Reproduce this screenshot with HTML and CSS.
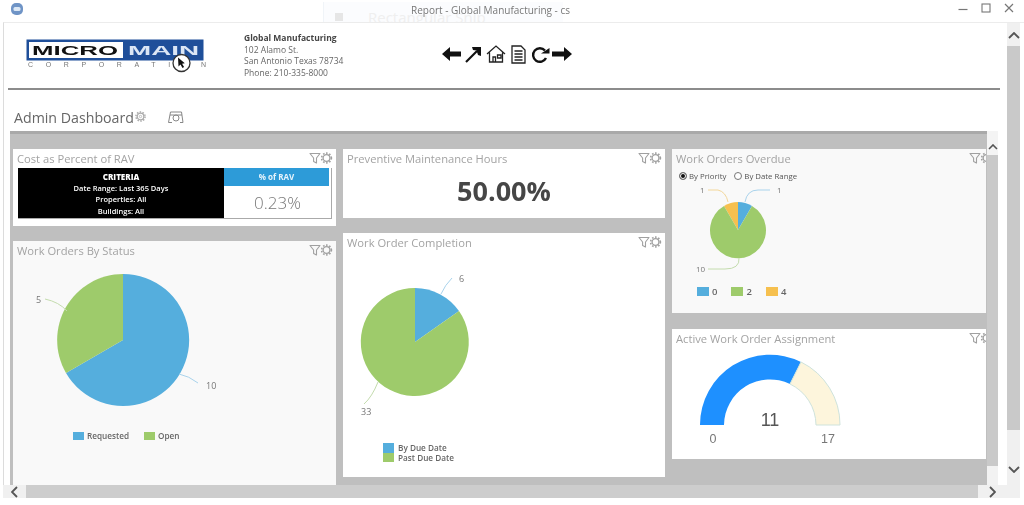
FILE: index.html
```html
<!DOCTYPE html>
<html lang="en">
<head>
<meta charset="utf-8">
<title>Report - Global Manufacturing - cs</title>
<link rel="stylesheet" href="styles.css">
</head>
<body>
<svg class="defs" width="0" height="0" aria-hidden="true">
  <symbol id="gear" viewBox="0 0 12 12">
    <circle cx="6" cy="6" r="3.6" fill="none" stroke="currentColor" stroke-width="1.3"/>
    <circle cx="6" cy="6" r="5" fill="none" stroke="currentColor" stroke-width="1.6" stroke-dasharray="1.6 1.55"/>
    <circle cx="6" cy="6" r="1.3" fill="none" stroke="currentColor" stroke-width=".8"/>
  </symbol>
  <symbol id="tools" viewBox="0 0 24 12">
    <path d="M1 1.5h10L7.5 6v5L4.6 9.5V6z" fill="none" stroke="currentColor" stroke-width="1.1" stroke-linejoin="round"/>
    <g transform="translate(11.5 0)">
      <circle cx="6" cy="6" r="3.4" fill="none" stroke="currentColor" stroke-width="1.3"/>
      <circle cx="6" cy="6" r="4.9" fill="none" stroke="currentColor" stroke-width="1.6" stroke-dasharray="1.6 1.55"/>
    </g>
  </symbol>
</svg>
<div class="app">
  <header class="titlebar">
    <svg class="app-icon" width="14" height="14" viewBox="0 0 14 14"><rect x="1" y="1" width="12" height="12" rx="5" fill="#6f94c6"/><rect x="3.5" y="5" width="7" height="4" rx="1.5" fill="#dce8f5"/></svg>
    <div class="win-title">Report - Global Manufacturing - cs</div>
    <div class="win-controls">
      <svg width="12" height="12" viewBox="0 0 12 12"><path d="M1.5 7.5h9" stroke="#777" stroke-width="1.2"/></svg>
      <svg width="12" height="12" viewBox="0 0 12 12"><rect x="2" y="2" width="8" height="8" fill="none" stroke="#777" stroke-width="1.1"/></svg>
      <svg width="12" height="12" viewBox="0 0 12 12"><path d="M2 2l8 8M10 2l-8 8" stroke="#777" stroke-width="1.2"/></svg>
    </div>
    <div class="snip"><span class="snip-icon"></span>Rectangular Snip</div>
  </header>

  <div class="frame">
    <main class="view">
      <section class="report-head">
        <svg class="logo" width="190" height="38" viewBox="0 0 190 38">
          <rect x="0.500" y="4.500" width="177" height="21" fill="#1f4f9a"/>
          <rect x="3" y="7" width="94" height="16" fill="#fff"/>
          <text x="6" y="20" class="logo-a" textLength="86" lengthAdjust="spacingAndGlyphs">MICRO</text>
          <text x="102" y="20" class="logo-b" textLength="71" lengthAdjust="spacingAndGlyphs">MAIN</text>
          <text x="2" y="32" class="logo-c" textLength="178" lengthAdjust="spacing">CORPORATION</text>
          <circle cx="155.500" cy="28" r="8.500" fill="#fff" stroke="#333" stroke-width="1.300"/>
          <path d="M152 22.500l.5 9 2-2 2 3.500 1.600-1-2-3.300 2.700-.5z" fill="#111"/>
        </svg>
        <div class="org">
          <strong>Global Manufacturing</strong>
          <span>102 Alamo St.</span>
          <span>San Antonio Texas 78734</span>
          <span>Phone: 210-335-8000</span>
        </div>
        <svg class="nav-icons" width="132" height="22" viewBox="0 0 132 22">
          <path d="M1 11l8-7v4.500h11v5H9V18z" fill="#111"/>
          <path d="M25 19L36 8" fill="none" stroke="#111" stroke-width="2.200"/>
          <path d="M31 4h9v9l-3-1-1.500-4.500L32 7z" fill="#111"/>
          <path d="M46 11l9-8 9 8M48.500 9.500V19h13V9.500M52 19v-5h2.500v5M56.500 12h3.500v3h-3.500z" fill="none" stroke="#222" stroke-width="1.300"/>
          <path d="M71 3h9l4 4v13H71zM73.500 8h8M73.500 11h8M73.500 14h8M73.500 17h8" fill="none" stroke="#222" stroke-width="1.300"/>
          <path d="M105 15a6.800 6.800 0 1 1-1-7.500" fill="none" stroke="#111" stroke-width="2.400"/>
          <path d="M100 10.500h8.500V5z" fill="#111"/>
          <path d="M131 11l-8-7v4.500h-12v5h12V18z" fill="#111"/>
        </svg>
      </section>
      <hr class="rule">
      <div class="dash-title">
        <h1>Admin Dashboard</h1>
        <svg class="gear" width="11" height="11"><use href="#gear"/></svg>
        <svg class="report-icon" width="18" height="14" viewBox="0 0 18 14"><path d="M5 12.500H1.500L3.500 2h11l1.500 10.500h-3M3 5h12" fill="none" stroke="#888" stroke-width="1"/><circle cx="9" cy="8" r="3" fill="none" stroke="#888"/></svg>
      </div>

      <div class="panel-wrap">
        <div class="panel">
          <div class="col col-a">
            <article class="card card-rav">
              <div class="card-head"><h2>Cost as Percent of RAV</h2><svg class="tools" width="24" height="12"><use href="#tools"/></svg></div>
              <div class="rav">
                <div class="criteria">
                  <b>CRITERIA</b>
                  <span>Date Range: Last 365 Days</span>
                  <span>Properties: All</span>
                  <span>Buildings: All</span>
                </div>
                <div class="rav-side">
                  <div class="rav-label">% of RAV</div>
                  <div class="rav-value">0.23%</div>
                </div>
              </div>
            </article>
            <article class="card card-status tint">
              <div class="card-head"><h2>Work Orders By Status</h2><svg class="tools" width="24" height="12"><use href="#tools"/></svg></div>
              <svg class="chart" width="323" height="155" viewBox="0 2 323 155">
                <path d="M110 16A66 66 0 1 1 53 115L110 82Z" fill="#55aedd"/>
                <path d="M110 16A66 66 0 0 0 53 115L110 82Z" fill="#9ecb6b"/>
                <path d="M32 41q14 3 22 12" class="lead-g"/>
                <path d="M166 116q10 2 19 9" class="lead-b"/>
                <text x="23" y="45" class="lbl">5</text>
                <text x="193" y="131" class="lbl">10</text>
              </svg>
              <div class="legend legend-status">
                <span class="key"><i class="sw blue"></i>Requested</span>
                <span class="key"><i class="sw green"></i>Open</span>
              </div>
            </article>
          </div>

          <div class="col col-b">
            <article class="card card-pm">
              <div class="card-head"><h2>Preventive Maintenance Hours</h2><svg class="tools" width="24" height="12"><use href="#tools"/></svg></div>
              <div class="big">50.00%</div>
            </article>
            <article class="card card-comp">
              <div class="card-head"><h2>Work Order Completion</h2><svg class="tools" width="24" height="12"><use href="#tools"/></svg></div>
              <svg class="chart" width="322" height="174" viewBox="0 1 322 174">
                <path d="M72 37A54 54 0 0 1 116 60L72 91Z" fill="#55aedd"/>
                <path d="M72 37A54 54 0 1 0 116 60L72 91Z" fill="#9ecb6b"/>
                <path d="M98 43q4-9 11-16" class="lead-b"/>
                <path d="M35 131q-6 15-14 22" class="lead-g"/>
                <text x="116" y="31" class="lbl">6</text>
                <text x="18" y="164" class="lbl">33</text>
              </svg>
              <div class="legend legend-comp">
                <span class="key"><i class="sw blue"></i>By Due Date</span>
                <span class="key"><i class="sw green"></i>Past Due Date</span>
              </div>
            </article>
          </div>

          <div class="col col-c">
            <article class="card card-over tint">
              <div class="card-head"><h2>Work Orders Overdue</h2><svg class="tools" width="24" height="12"><use href="#tools"/></svg></div>
              <div class="radios">
                <span class="radio"><i class="dot on"></i>By Priority</span>
                <span class="radio"><i class="dot"></i>By Date Range</span>
              </div>
              <svg class="chart" width="314" height="100" viewBox="0 0 314 100">
                <path d="M66 20A28 28 0 0 1 80 24L66 48Z" fill="#55aedd"/>
                <path d="M66 20A28 28 0 0 0 52 24L66 48Z" fill="#f6c04f"/>
                <path d="M80 24A28 28 0 1 1 52 24L66 48Z" fill="#9ecb6b"/>
                <path d="M73 20q2-12 13-12h12" class="lead-b"/>
                <path d="M56 20q-2-10-10-12H36" class="lead-o"/>
                <path d="M67 76q1 11-14 11H36" class="lead-g"/>
                <text x="105" y="11" class="lbl tiny">1</text>
                <text x="28" y="11" class="lbl tiny">1</text>
                <text x="24" y="90" class="lbl tiny">10</text>
              </svg>
              <div class="legend legend-over">
                <span class="key"><i class="sw blue"></i>0</span>
                <span class="key"><i class="sw green"></i>2</span>
                <span class="key"><i class="sw orange"></i>4</span>
              </div>
            </article>
            <article class="card card-gauge">
              <div class="card-head"><h2>Active Work Order Assignment</h2><svg class="tools" width="24" height="12"><use href="#tools"/></svg></div>
              <svg class="chart" width="314" height="108" viewBox="0 2 314 108">
                <path d="M28 79A70 70 0 0 1 129 16L118 38A46 46 0 0 0 52 79Z" fill="#1e90ff"/>
                <path d="M129 16A70 70 0 0 1 168 79H144A46 46 0 0 0 118 38Z" fill="#fdf5dc" stroke="#cfe3dc"/>
                <text x="98" y="80" class="gauge-val" text-anchor="middle">11</text>
                <text x="41" y="97" class="gauge-end" text-anchor="middle">0</text>
                <text x="156" y="97" class="gauge-end" text-anchor="middle">17</text>
              </svg>
            </article>
          </div>
        </div>
        <div class="vbar vbar-in">
          <span class="vcap top"><svg width="10" height="6" viewBox="0 0 10 6"><path d="M1 5l4-4 4 4" fill="none" stroke="#555" stroke-width="1.600"/></svg></span>
          <span class="vthumb"></span>
          <span class="vcap low"></span>
        </div>
      </div>
    </main>
    <div class="vbar vbar-out">
      <span class="vcap top"><svg width="12" height="7" viewBox="0 0 12 7"><path d="M1 6l5-5 5 5" fill="none" stroke="#555" stroke-width="1.800"/></svg></span>
      <span class="vthumb"></span>
      <span class="vcap low"><svg width="12" height="7" viewBox="0 0 12 7"><path d="M1 1l5 5 5-5" fill="none" stroke="#555" stroke-width="1.800"/></svg></span>
    </div>
  </div>
  <div class="hbar">
    <span class="hcap left"><svg width="7" height="12" viewBox="0 0 7 12"><path d="M6 1L1 6l5 5" fill="none" stroke="#555" stroke-width="1.800"/></svg></span>
    <span class="hthumb"></span>
    <span class="hcap right"><svg width="7" height="12" viewBox="0 0 7 12"><path d="M1 1l5 5-5 5" fill="none" stroke="#555" stroke-width="1.800"/></svg></span>
  </div>
</div>
</body>
</html>
```
FILE: styles.css
```css
* { box-sizing: border-box; }
html, body { margin: 0; background: #fff; }
body { font-family: "Open Sans", "Liberation Sans", sans-serif; color: #555; }
.defs { position: absolute; }
.app { width: 1024px; height: 505px; display: flex; flex-direction: column; overflow: hidden; filter: blur(.45px); }

/* window chrome */
.titlebar { position: relative; height: 22px; flex: none; display: flex; align-items: center; padding-left: 10px; }
.app-icon { flex: none; margin-top: -4px; }
.win-title { flex: 1; position: relative; z-index: 1; text-align: center; font-size: 10px; color: #777; padding: 0 0 3px 0; }
.win-controls { display: flex; gap: 11px; padding-right: 9px; margin-top: -7px; }
.snip { position: absolute; left: 323px; top: 2px; width: 240px; height: 30px; z-index: 0; padding: 5px 0 0 44px; font-size: 15px; color: #efefef; background: #fbfcfe; border-left: 1px solid #f0f4f8; white-space: nowrap; }
.snip-icon { position: absolute; left: 11px; top: 11px; width: 8px; height: 8px; background: #e6e6e6; }
.frame { flex: none; height: 463px; margin-left: 3px; display: flex; border-left: 1px solid #dcdcdc; border-top: 1px solid #ececec; position: relative; z-index: 1; background: #fff; }
.view { width: 1003px; flex: none; display: flex; flex-direction: column; padding-left: 6px; }
.vbar { display: flex; flex-direction: column; flex: none; }
.vbar-out { width: 13px; }
.vbar-in { width: 11px; }
.vcap { background: #f0f0f0; display: flex; justify-content: center; flex: none; }
.vthumb { flex: 1; background: #c9c9c9; }
.vbar-out .vcap.top { height: 23px; padding-top: 9px; background: #f0f0f0; }
.vbar-out .vcap.low { height: 55px; align-items: flex-end; padding-bottom: 12px; }
.vbar-in .vcap.top { height: 24px; padding-top: 13px; background: #f4f4f4; }
.vbar-in .vcap.low { height: 19px; background: #f2f2f2; }
.hbar { height: 13px; flex: none; margin: 0 4px 0 3px; display: flex; background: #f0f0f0; }
.hcap { display: flex; align-items: center; justify-content: center; flex: none; }
.hcap.left { width: 23px; }
.hthumb { flex: none; width: 952px; background: #cdcdcd; }
.hcap.right { width: 42px; justify-content: flex-start; padding-left: 11px; }

/* report header */
.report-head { height: 65px; flex: none; display: flex; align-items: flex-start; }
.logo { flex: none; margin: 12px 0 0 16px; }
.logo-a, .logo-b { font: 700 13px "Liberation Sans", sans-serif; }
.logo-a { fill: #111; }
.logo-b { fill: #dbe6f5; }
.logo-c { font: 400 7px "Liberation Sans", sans-serif; fill: #777; }
.org { flex: none; width: 198px; margin: 9px 0 0 28px; display: flex; flex-direction: column; font-size: 8.500px; line-height: 11.700px; color: #666; }
.org strong { color: #444; font-size: 8.500px; }
.nav-icons { flex: none; margin: 20px 0 0 -1px; }
.rule { margin: 0 0 0 -2px; width: 992px; height: 2px; flex: none; border: 0; background: #8c8c8c; }
.dash-title { height: 41px; flex: none; display: flex; align-items: flex-start; padding: 18px 0 0 4px; }
.dash-title h1 { margin: 0; font-size: 14.200px; line-height: 20px; font-weight: 400; color: #666; }
.gear { color: #aaa; margin: 3px 0 0 1px; }
.report-icon { margin: 2px 0 0 21px; }

/* dashboard panel */
.panel-wrap { flex: 1; min-height: 0; display: flex; }
.panel { width: 977px; flex: none; display: flex; gap: 7px; padding: 15px 0 0 3px; background: #bfbfbf; border-top: 3px solid #a9a9a9; overflow: hidden; }
.col { display: flex; flex-direction: column; flex: none; }
.col-a { width: 323px; gap: 15px; }
.col-b { width: 322px; gap: 15px; }
.col-c { width: 314px; gap: 16px; }
.card { background: #fff; flex: none; overflow: hidden; }
.card.tint { background: #f9f9f9; }
.card-rav { height: 77px; }
.card-status { height: 245px; }
.card-pm { height: 69px; }
.card-comp { height: 244px; }
.card-over { height: 164px; }
.card-gauge { height: 130px; }
.card-head { height: 19px; display: flex; justify-content: space-between; align-items: flex-start; padding: 2px 3px 0 4px; }
.col-c .card-head { margin-right: -10px; }
.card-head h2 { margin: 0; font-size: 11.200px; line-height: 16px; font-weight: 400; color: #a3a3a3; white-space: nowrap; }
.tools { color: #a0a0a0; margin-top: 1px; flex: none; }
.chart { display: block; }
.lbl { font: 400 9px "Open Sans", sans-serif; fill: #777; }
.lbl.tiny { font-size: 8px; }
.lead-g, .lead-b, .lead-o { fill: none; stroke-width: 1; }
.lead-g { stroke: #c4dcae; }
.lead-b { stroke: #a9d3ec; }
.lead-o { stroke: #f3d79a; }

/* RAV */
.rav { margin-left: 5px; width: 314px; height: 51px; display: flex; border: 1px solid #aaa; border-left: 0; border-top: 0; }
.criteria { width: 206px; background: #000; color: #fff; display: flex; flex-direction: column; align-items: center; font-size: 7.500px; line-height: 11.500px; padding-top: 3px; font-weight: 600; }
.criteria b { font-size: 8px; }
.rav-side { flex: 1; display: flex; flex-direction: column; }
.rav-label { height: 18px; background: #2d9bd8; color: #e6f3fb; font-size: 8px; font-weight: 700; text-align: center; line-height: 18px; margin-right: 2px; }
.rav-value { flex: 1; text-align: center; font-size: 17px; line-height: 34px; color: #777; font-weight: 300; }
.big { text-align: center; font-size: 27px; line-height: 36px; font-weight: 700; color: #464646; padding: 5px 0 0 0; }

/* legends */
.legend { display: flex; font-size: 8.200px; color: #666; font-weight: 600; }
.key { display: flex; align-items: center; gap: 3px; }
.sw { width: 11px; height: 8px; flex: none; }
.sw.blue { background: #55aedd; }
.sw.green { background: #9ecb6b; }
.sw.orange { background: #f6c04f; }
.legend-status { gap: 15px; padding: 15px 0 0 60px; }
.legend-comp { flex-direction: column; padding: 17px 0 0 40px; line-height: 9.500px; }
.legend-comp .key { gap: 4px; }
.legend-comp .sw { height: 9.500px; }
.legend-over { gap: 14px; padding: 3px 0 0 25px; font-size: 9.500px; }
.legend-over .sw { width: 12px; height: 9px; }
.radios { display: flex; gap: 8px; padding: 0 0 0 7px; height: 12px; margin-top: 2px; font-size: 7.800px; color: #555; align-items: center; }
.radio { display: flex; align-items: center; gap: 2px; }
.dot { width: 8px; height: 8px; border: 1px solid #777; border-radius: 50%; background: #fff; flex: none; }
.dot.on { background: #111; box-shadow: inset 0 0 0 1px #fff; }
.gauge-val { font: 400 18px "Liberation Sans", sans-serif; fill: #555; }
.gauge-end { font: 400 12.500px "Liberation Sans", sans-serif; fill: #777; }
```
